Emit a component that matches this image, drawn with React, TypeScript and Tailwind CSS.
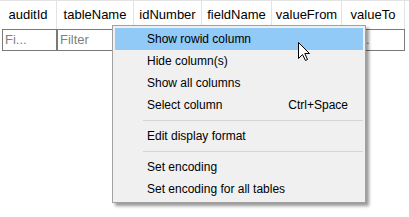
import React from 'react';

const columns = [
  { name: 'auditId', width: 'w-[57px]', filter: 'Fi...' },
  { name: 'tableName', width: 'w-[77px]', filter: 'Filter' },
  { name: 'idNumber', width: 'w-[68px]', filter: '' },
  { name: 'fieldName', width: 'w-[70px]', filter: '' },
  { name: 'valueFrom', width: 'w-[70px]', filter: '' },
  { name: 'valueTo', width: 'w-[63px]', filter: 'Fil...' },
];

type Entry = { label: string; shortcut?: string; active?: boolean } | 'sep';

const menu: Entry[] = [
  { label: 'Show rowid column', active: true },
  { label: 'Hide column(s)' },
  { label: 'Show all columns' },
  { label: 'Select column', shortcut: 'Ctrl+Space' },
  'sep',
  { label: 'Edit display format' },
  'sep',
  { label: 'Set encoding' },
  { label: 'Set encoding for all tables' },
];

const App = () => {
  return (
    <div
      className="relative w-[409px] h-[217px] overflow-hidden bg-white text-black"
      style={{ fontFamily: '"Liberation Sans", Arial, sans-serif' }}
    >
      {/* header */}
      <div className="flex h-[29px] border-t border-[#e3e3e3]">
        {columns.map((c) => (
          <div
            key={c.name}
            className={`${c.width} shrink-0 flex items-center justify-center border-r border-[#e3e3e3] text-[13px]`}
          >
            {c.name}
          </div>
        ))}
      </div>

      {/* filter row */}
      <div className="flex h-[22px] pl-[2px]">
        {columns.map((c, i) => (
          <div
            key={c.name}
            className={`${i === 0 ? 'w-[55px]' : c.width} shrink-0 h-[22px] border border-[#7a7a7a] flex items-center pl-[2px] text-[13px] text-[#7f7f7f] bg-white`}
          >
            {c.filter}
          </div>
        ))}
      </div>

      {/* context menu */}
      <div className="absolute left-[112px] top-[25px] w-[254px] border border-[#a0a0a0] bg-[#f0f0f0] p-[2px] shadow-[3px_3px_3px_rgba(0,0,0,0.4)] text-[12px]">
        {menu.map((m, i) =>
          m === 'sep' ? (
            <div key={i} className="h-[9px] flex items-center pl-[28px]">
              <div className="h-px w-full bg-[#d5d5d5]" />
            </div>
          ) : (
            <div
              key={i}
              className={`h-[22px] flex items-center justify-between pl-[32px] pr-[15px] ${
                m.active ? 'bg-[#91c9f7]' : ''
              }`}
            >
              <span>{m.label}</span>
              {m.shortcut && <span>{m.shortcut}</span>}
            </div>
          )
        )}
      </div>

      {/* mouse pointer */}
      <svg
        className="absolute left-[298px] top-[42px]"
        width="13"
        height="20"
        viewBox="0 0 13 20"
      >
        <path
          d="M0.5 0.5 L0.5 16.5 L4.5 12.5 L7.5 18.5 L9.5 17.5 L6.8 11.5 L11.5 11.5 Z"
          fill="white"
          stroke="black"
          strokeWidth="1"
        />
      </svg>
    </div>
  );
};

export default App;
